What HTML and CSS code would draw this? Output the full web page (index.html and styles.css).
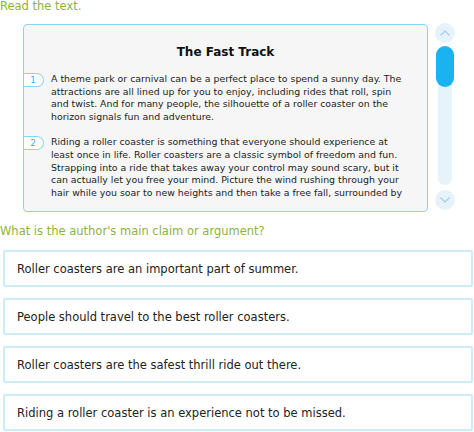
FILE: index.html
```html
<!DOCTYPE html>
<html>
<head>
<meta charset="utf-8">
<link rel="stylesheet" href="styles.css">
</head>
<body>
<div class="page">
  <div class="prompt">Read the text.</div>
  <div class="reader">
    <div class="passage">
      <div class="scroll">
        <h1 class="title">The Fast Track</h1>
        <div class="para">
          <span class="num">1</span>
          <p>A theme park or carnival can be a perfect place to spend a sunny day. The attractions are all lined up for you to enjoy, including rides that roll, spin and twist. And for many people, the silhouette of a roller coaster on the horizon signals fun and adventure.</p>
        </div>
        <div class="para">
          <span class="num">2</span>
          <p>Riding a roller coaster is something that everyone should experience at least once in life. Roller coasters are a classic symbol of freedom and fun. Strapping into a ride that takes away your control may sound scary, but it can actually let you free your mind. Picture the wind rushing through your hair while you soar to new heights and then take a free fall, surrounded by</p>
        </div>
      </div>
    </div>
    <div class="scrollbar">
      <div class="arrow">
        <svg width="12" height="8" viewBox="0 0 12 8"><path d="M1.5 6.5 L6 2 L10.5 6.5" fill="none" stroke="#a9cfe4" stroke-width="1.3"/></svg>
      </div>
      <div class="track"><div class="thumb"></div></div>
      <div class="arrow">
        <svg width="12" height="8" viewBox="0 0 12 8"><path d="M1.5 1.5 L6 6 L10.5 1.5" fill="none" stroke="#a9cfe4" stroke-width="1.3"/></svg>
      </div>
    </div>
  </div>
  <div class="question">What is the author's main claim or argument?</div>
  <div class="options">
    <div class="option">Roller coasters are an important part of summer.</div>
    <div class="option">People should travel to the best roller coasters.</div>
    <div class="option">Roller coasters are the safest thrill ride out there.</div>
    <div class="option">Riding a roller coaster is an experience not to be missed.</div>
  </div>
</div>
</body>
</html>
```
FILE: styles.css
```css
html, body {
  margin: 0;
  padding: 0;
  background: #ffffff;
}
body {
  font-family: "DejaVu Sans", Verdana, sans-serif;
  width: 474px;
  height: 432px;
  overflow: hidden;
}
.page {
  padding: 0 1px 0 3px;
}
.prompt {
  color: #8db33d;
  font-size: 11.5px;
  line-height: 14px;
  margin-left: -3px;
  margin-top: -1px;
}
.reader {
  display: flex;
  align-items: flex-start;
  margin-top: 11px;
  margin-left: 20px;
}
.passage {
  width: 405px;
  height: 188px;
  border: 1px solid #8fd3f2;
  border-radius: 4px;
  background: #f6f6f6;
  padding: 0 0 13px 0;
  box-sizing: border-box;
}
.scroll {
  height: 100%;
  box-sizing: border-box;
  overflow: hidden;
  padding-top: 20px;
}
.title {
  font-size: 12px;
  font-weight: bold;
  text-align: center;
  margin: 0 0 14px 0;
  line-height: 14px;
  color: #111;
}
.para {
  display: flex;
  align-items: flex-start;
  margin-bottom: 13px;
}
.num {
  flex: none;
  width: 20px;
  height: 12px;
  margin-top: 0px;
  margin-left: -1px;
  border: 1px solid #8fd3f2;
  border-left: none;
  border-radius: 0 8px 8px 0;
  background: #fff;
  color: #4aaee0;
  font-size: 9px;
  line-height: 12px;
  text-align: center;
}
.para p {
  margin: 0 0 0 7px;
  font-size: 9.4px;
  line-height: 12.6px;
  color: #222;
  width: 355px;
}
.scrollbar {
  margin-left: 7px;
  margin-top: -1px;
  width: 20px;
  display: flex;
  flex-direction: column;
  align-items: center;
}
.arrow {
  width: 20px;
  height: 20px;
  border-radius: 50%;
  background: #e6f3fa;
  display: flex;
  align-items: center;
  justify-content: center;
}
.track {
  width: 14px;
  height: 139px;
  margin: 3px 0 5px 0;
  background: #e6f3fa;
  border-radius: 7px;
  display: flex;
  justify-content: center;
}
.thumb {
  width: 18px;
  flex: none;
  height: 41px;
  border-radius: 9px;
  background: #1ab3f1;
}
.question {
  color: #8db33d;
  font-size: 11.5px;
  line-height: 14px;
  margin: 12px 0 0 -3px;
}
.options {
  display: flex;
  flex-direction: column;
  gap: 11px;
  margin-top: 12px;
}
.option {
  height: 37px;
  box-sizing: border-box;
  border: 2px solid #cdebf8;
  border-radius: 2px;
  padding-left: 12px;
  display: flex;
  align-items: center;
  font-size: 11.5px;
  color: #222;
}
```
